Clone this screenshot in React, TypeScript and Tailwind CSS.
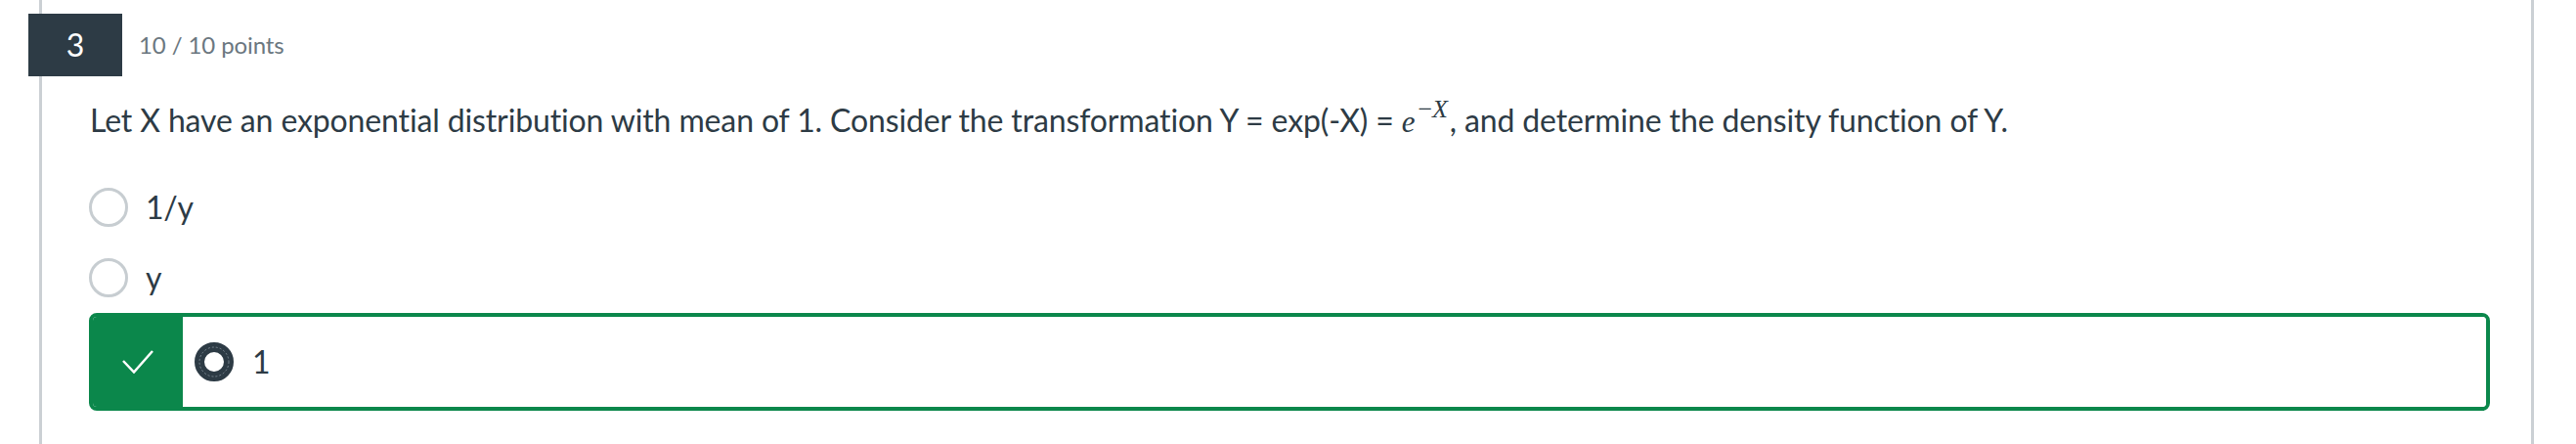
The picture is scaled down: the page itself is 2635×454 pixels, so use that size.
import React from 'react';

const answers = ['1/y', 'y'];

function EmptyRadio() {
  return <div className="h-[40px] w-[40px] shrink-0 rounded-full border-[3px] border-[#c7cdd1] bg-white" />;
}

function SelectedRadio() {
  return (
    <svg width="40" height="40" viewBox="0 0 40 40" className="shrink-0">
      <circle cx="20" cy="20" r="15" fill="#fff" stroke="#2d3b45" strokeWidth="10" />
      <circle cx="20" cy="20" r="15" fill="none" stroke="#8a96a0" strokeWidth="0.8" strokeDasharray="2 2" />
    </svg>
  );
}

export default function App() {
  return (
    <div className="h-[454px] w-[2635px] overflow-hidden bg-white font-['Lato',sans-serif] text-[#2d3b45]">
      <div className="ml-[40px] h-full w-[2552px] border-x-[3px] border-[#cbd0d4] pl-[48px] pr-[42px]">
        {/* Header */}
        <div className="-ml-[62px] flex h-[92px] items-center gap-[17px]">
          <div className="flex h-[64px] w-[96px] items-center justify-center bg-[#2d3b45] text-[32px] text-white">
            3
          </div>
          <span className="text-[24px] tracking-[-0.1px] text-[#6b7780]">10 / 10 points</span>
        </div>

        {/* Question */}
        <p className="mt-[7px] pl-[1px] text-[32px] leading-[48px] tracking-[-0.13px]">
          Let X have an exponential distribution with mean of 1. Consider the transformation Y = exp(-X) ={' '}
          <span className="font-['Liberation_Serif',serif] text-[31px] italic">e</span>
          <sup className="top-[-15px] ml-[3px] mr-[2px] font-['Liberation_Serif',serif] text-[26px]">
            −<i>X</i>
          </sup>
          , and determine the density function of Y.
        </p>

        {/* Answers */}
        <div className="mt-[27px]">
          {answers.map((a) => (
            <div key={a} className="flex h-[72px] items-center gap-[18px]">
              <EmptyRadio />
              <span className="text-[32px] tracking-[-0.3px]">{a}</span>
            </div>
          ))}
          <div className="flex h-[100px] overflow-hidden rounded-[8px] border-4 border-[#0b874b]">
            <div className="flex w-[92px] items-center justify-center bg-[#0b874b]">
              <svg width="32" height="24" viewBox="0 0 32 24">
                <polyline points="1,11 12,22.5 31,1" fill="none" stroke="#fff" strokeWidth="2.5" />
              </svg>
            </div>
            <div className="flex flex-1 items-center gap-[19px] bg-white pl-[12px]">
              <SelectedRadio />
              <span className="text-[32px]">1</span>
            </div>
          </div>
        </div>
      </div>
    </div>
  );
}
